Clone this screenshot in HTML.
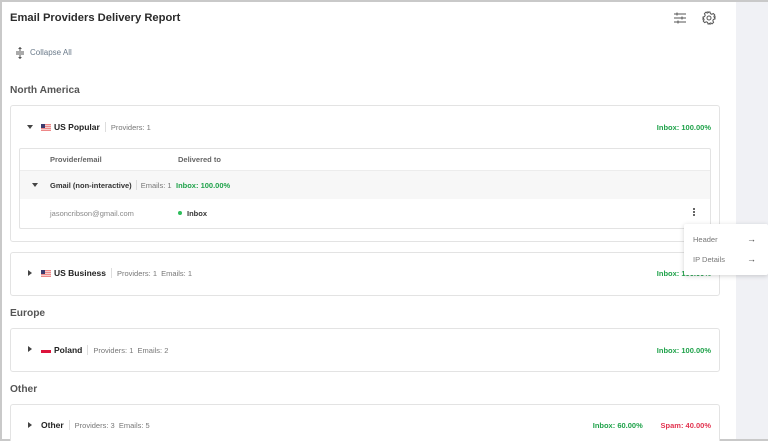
<!DOCTYPE html>
<html><head><style>
*{box-sizing:border-box;margin:0;padding:0}
html,body{width:768px;height:441px;overflow:hidden}
body{background:#c9c9c9;font-family:"Liberation Sans",sans-serif;position:relative}
.main{position:absolute;left:2px;top:2px;width:734px;height:437px;background:#fff}
.side{position:absolute;left:736px;top:2px;width:32px;height:437px;background:#f0f1f5}
.a{position:absolute;white-space:nowrap}
.f{display:flex;align-items:center;height:12px}
.t{font-size:11.2px;font-weight:bold;color:#2b2b2b}
.h{font-size:10.2px;font-weight:bold;color:#555}
.card{position:absolute;left:10px;width:710px;border:1px solid #e3e3e3;border-radius:3px;background:#fff}
.nm{font-size:8.5px;font-weight:bold;color:#222}
.sm{font-size:7.5px;color:#777}
.g{font-size:7.5px;font-weight:bold;color:#1fa24a}
.r{font-size:7.5px;font-weight:bold;color:#e2334f}
.sep{display:inline-block;width:1px;height:10px;background:#ddd;margin:0 5px}
.tri{position:absolute;width:0;height:0}
.down{border-left:3px solid transparent;border-right:3px solid transparent;border-top:4px solid #444}
.right{border-top:3px solid transparent;border-bottom:3px solid transparent;border-left:4px solid #444}
.us{display:inline-block;width:10px;height:7px;background:linear-gradient(#3c3b6e,#3c3b6e) 0 0/4px 4px no-repeat,repeating-linear-gradient(#e88 0 1px,#f5d0d0 1px 2px);margin-right:3px}
.pl{display:inline-block;width:10px;height:6px;background:linear-gradient(#fff 50%,#dc143c 50%);margin-right:3px}
</style></head><body>
<div class="main"></div><div class="side"></div>
<div class="a t" style="left:10px;top:12px">Email Providers Delivery Report</div>
<svg class="a" style="left:673px;top:11px" width="14" height="14" viewBox="0 0 14 14" fill="none" stroke="#555" stroke-width="1"><path d="M1 3h12M1 7h12M1 11h12"/><path d="M4 1.5v3M9 5.5v3M5 9.5v3"/></svg>
<svg class="a" style="left:702px;top:11px" width="14" height="14" viewBox="0 0 14 14" fill="none" stroke="#555" stroke-width="1"><circle cx="7" cy="7" r="2"/><path d="M6 1h2l.4 1.6 1.4.7 1.5-.8 1.4 1.4-.8 1.5.6 1.4L13 6v2l-1.6.4-.6 1.4.8 1.5-1.4 1.4-1.5-.8-1.4.6L8 13H6l-.4-1.6-1.4-.6-1.5.8-1.4-1.4.8-1.5-.6-1.4L1 8V6l1.6-.4.6-1.4-.8-1.5 1.4-1.4 1.5.8 1.4-.7z"/></svg>
<svg class="a" style="left:15px;top:47px" width="10" height="12" viewBox="0 0 10 12" stroke="#555" fill="#555"><path d="M1 5h8M1 7h8M5 0v4M5 8v4" stroke-width="1"/><path d="M3 2l2-2 2 2zM3 10l2 2 2-2z" stroke="none"/></svg>
<div class="a" style="left:30px;top:48px;font-size:8px;color:#6a7a8a">Collapse All</div>
<div class="a h" style="left:10px;top:85px">North America</div>
<div class="card" style="top:105px;height:137px"></div>
<div class="tri down" style="left:27px;top:125px"></div>
<div class="a f" style="left:41px;top:121px"><span class="us"></span><span class="nm">US Popular</span><span class="sep"></span><span class="sm">Providers: 1</span></div>
<div class="a g f" style="right:57px;top:121px">Inbox: 100.00%</div>
<div class="a" style="left:19px;top:148px;width:692px;height:81px;border:1px solid #e3e3e3;border-radius:2px"></div>
<div class="a" style="left:20px;top:170px;width:690px;height:29px;background:#f7f7f7;border-top:1px solid #ececec"></div>
<div class="a f" style="left:50px;top:153px;font-size:7.5px;font-weight:bold;color:#666">Provider/email</div>
<div class="a f" style="left:178px;top:153px;font-size:7.5px;font-weight:bold;color:#666">Delivered to</div>
<div class="tri down" style="left:32px;top:183px"></div>
<div class="a f" style="left:50px;top:179px"><span style="font-size:7.5px;font-weight:bold;color:#333">Gmail (non-interactive)</span><span class="sep" style="margin:0 4px"></span><span class="sm">Emails: 1</span>&nbsp;<span class="g">Inbox: 100.00%</span></div>
<div class="a f" style="left:50px;top:207px;font-size:7.5px;color:#888">jasoncribson@gmail.com</div>
<div class="a" style="left:178px;top:211px;width:4px;height:4px;border-radius:50%;background:#2ebd5b"></div>
<div class="a f" style="left:187px;top:207px;font-size:7.5px;font-weight:bold;color:#333">Inbox</div>
<div class="a" style="left:693px;top:208px;width:2px;height:2px;background:#666;box-shadow:0 3px #666,0 6px #666"></div>
<div class="card" style="top:252px;height:44px"></div>
<div class="tri right" style="left:28px;top:270px"></div>
<div class="a f" style="left:41px;top:267px"><span class="us"></span><span class="nm">US Business</span><span class="sep"></span><span class="sm">Providers: 1 &nbsp;Emails: 1</span></div>
<div class="a g f" style="right:57px;top:267px">Inbox: 100.00%</div>
<div class="a h" style="left:10px;top:308px">Europe</div>
<div class="card" style="top:328px;height:44px"></div>
<div class="tri right" style="left:28px;top:346px"></div>
<div class="a f" style="left:41px;top:344px"><span class="pl"></span><span class="nm">Poland</span><span class="sep"></span><span class="sm">Providers: 1 &nbsp;Emails: 2</span></div>
<div class="a g f" style="right:57px;top:344px">Inbox: 100.00%</div>
<div class="a h" style="left:10px;top:384px">Other</div>
<div class="card" style="top:404px;height:50px"></div>
<div class="tri right" style="left:28px;top:422px"></div>
<div class="a f" style="left:41px;top:419px"><span class="nm">Other</span><span class="sep"></span><span class="sm">Providers: 3 &nbsp;Emails: 5</span></div>
<div class="a f" style="right:57px;top:419px"><span class="g">Inbox: 60.00%</span>&nbsp;&nbsp;&nbsp;&nbsp;<span class="r">Spam: 40.00%</span></div>
<div class="a" style="left:684px;top:224px;width:84px;height:51px;background:#fff;box-shadow:0 1px 5px rgba(0,0,0,.18);border-radius:2px"></div>
<div class="a f" style="left:693px;top:233px;font-size:7.5px;color:#777">Header</div>
<div class="a f" style="left:693px;top:253px;font-size:7.5px;color:#777">IP Details</div>
<div class="a f" style="left:747px;top:233px;font-size:9px;color:#444">→</div>
<div class="a f" style="left:747px;top:253px;font-size:9px;color:#444">→</div>
</body></html>
